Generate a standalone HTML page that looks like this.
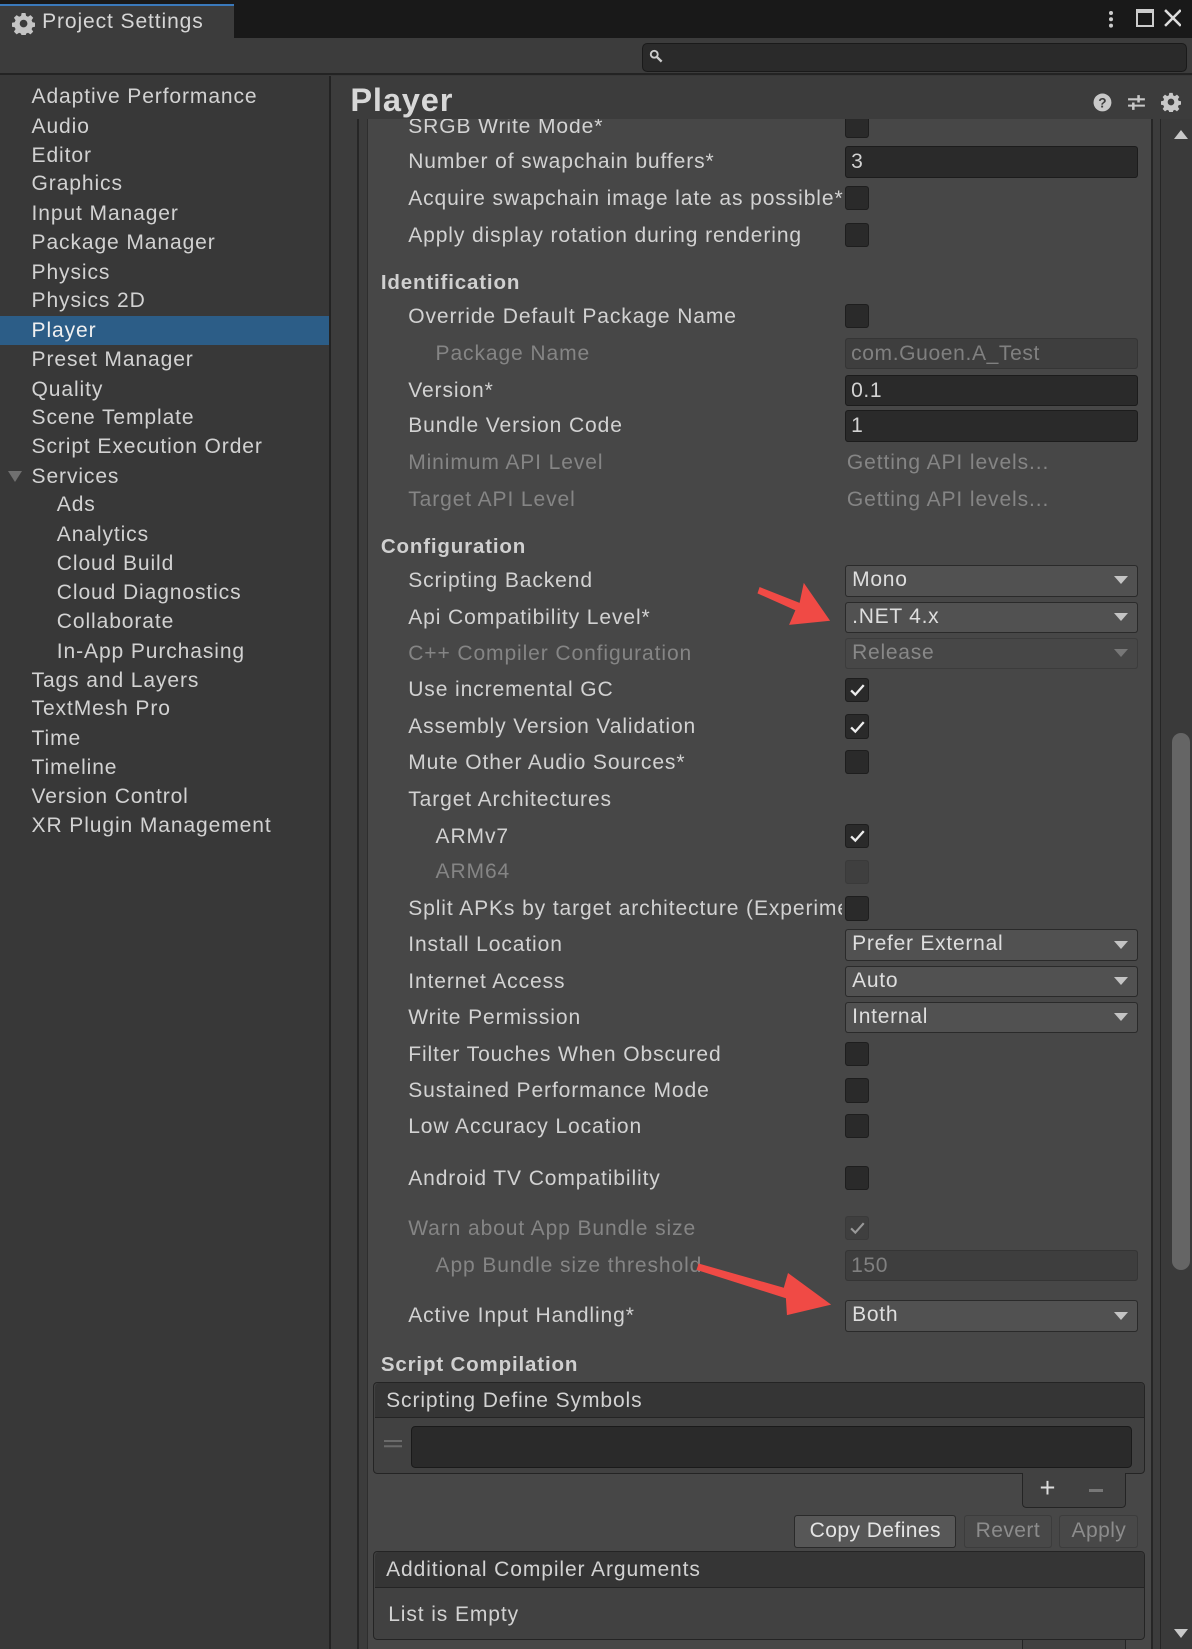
<!DOCTYPE html>
<html><head><meta charset="utf-8"><style>
*{box-sizing:border-box;margin:0;padding:0}
html,body{width:1192px;height:1649px;overflow:hidden;background:#383838}
#w{position:relative;width:1133px;height:1568px;zoom:1.05208;font-family:"Liberation Sans",sans-serif;color:#d2d2d2;overflow:hidden;background:#383838}
.a{position:absolute}
.t{position:absolute;font-size:20px;line-height:26px;white-space:nowrap;letter-spacing:0.85px}
.d{color:#858585}
.h{font-weight:bold;font-size:19.5px;color:#d0d0d0;letter-spacing:0.8px}
.cb{position:absolute;left:803px;width:23px;height:23px;background:#2a2a2a;border:1px solid #1e1e1e;border-radius:3px}
.cb.dis{background:#3f3f3f;border-color:#3a3a3a}
.cb svg{position:absolute;left:3px;top:3px}
.f{position:absolute;left:803px;width:279px;height:30px;background:#2a2a2a;border:1px solid #1c1c1c;border-radius:3px;font-size:20px;line-height:28px;padding-left:5px;color:#d2d2d2;letter-spacing:0.6px}
.f.dis{background:#3e3e3e;border-color:#353535;color:#808080}
.dd{position:absolute;left:803px;width:279px;height:30px;background:#515151;border:1px solid #2a2a2a;border-radius:3px;font-size:20px;line-height:27px;padding-left:6px;color:#dedede;letter-spacing:0.7px}
.dd:after{content:"";position:absolute;right:9px;top:10px;border-left:7px solid transparent;border-right:7px solid transparent;border-top:8px solid #c4c4c4}
.dd.dis{background:#474747;border-color:#3c3c3c;color:#888}
.dd.dis:after{border-top-color:#777}
.sb{left:30px}
.btn{position:absolute;height:31px;border-radius:3px;font-size:20px;line-height:29px;text-align:center;letter-spacing:0.4px}
</style></head><body><div id="w">
<div class="a" style="left:0;top:0;width:1133px;height:36px;background:#191919"></div>
<div class="a" style="left:0;top:4px;width:222px;height:33px;background:#3c3c3c;border-top:2px solid #3a79bb"></div>
<svg class="a" style="left:11px;top:11px" width="22" height="22" viewBox="0 0 24 24"><path fill="#c4c4c4" d="M10 1h4l.6 3 2 .9 2.6-1.7 2.8 2.8-1.7 2.6.9 2 3 .6v4l-3 .6-.9 2 1.7 2.6-2.8 2.8-2.6-1.7-2 .9-.6 3h-4l-.6-3-2-.9-2.6 1.7-2.8-2.8 1.7-2.6-.9-2-3-.6v-4l3-.6.9-2-1.7-2.6 2.8-2.8 2.6 1.7 2-.9zM12 8a4 4 0 1 0 0 8 4 4 0 1 0 0-8z"/></svg>
<div class="t" style="left:40px;top:8px;color:#d6d6d6">Project Settings</div>
<div class="a" style="left:1054px;top:10px;width:4px;height:4px;background:#ccc;border-radius:2px;box-shadow:0 6px 0 #ccc,0 12px 0 #ccc"></div>
<div class="a" style="left:1080px;top:9px;width:17px;height:17px;border:2px solid #ccc;border-top-width:4px"></div>
<svg class="a" style="left:1106px;top:9px" width="17" height="17"><path d="M1 1L16 16M16 1L1 16" stroke="#ddd" stroke-width="2.4"/></svg>
<div class="a" style="left:0;top:36px;width:1133px;height:35px;background:#3c3c3c;border-bottom:2px solid #232323"></div>
<div class="a" style="left:610px;top:41px;width:518px;height:27px;background:#2a2a2a;border:1px solid #1a1a1a;border-radius:5px"></div>
<svg class="a" style="left:617px;top:47px" width="14" height="14"><circle cx="5" cy="5" r="3.3" stroke="#ccc" stroke-width="1.8" fill="none"/><path d="M7.5 7.5L12 12" stroke="#ccc" stroke-width="2.2"/></svg>
<div class="a" style="left:0;top:72px;width:313px;height:1500px;background:#383838"></div>
<div class="a" style="left:0;top:300px;width:313px;height:28px;background:#2c5d87"></div>
<div class="a" style="left:313px;top:72px;width:2px;height:1500px;background:#232323"></div>
<div class="t sb" style="top:79px">Adaptive Performance</div>
<div class="t sb" style="top:107px">Audio</div>
<div class="t sb" style="top:135px">Editor</div>
<div class="t sb" style="top:162px">Graphics</div>
<div class="t sb" style="top:190px">Input Manager</div>
<div class="t sb" style="top:218px">Package Manager</div>
<div class="t sb" style="top:246px">Physics</div>
<div class="t sb" style="top:273px">Physics 2D</div>
<div class="t sb" style="top:301px;color:#f0f0f0">Player</div>
<div class="t sb" style="top:329px">Preset Manager</div>
<div class="t sb" style="top:357px">Quality</div>
<div class="t sb" style="top:384px">Scene Template</div>
<div class="t sb" style="top:412px">Script Execution Order</div>
<div class="a" style="left:8px;top:448px;border-left:7px solid transparent;border-right:7px solid transparent;border-top:11px solid #707070"></div>
<div class="t sb" style="top:440px">Services</div>
<div class="t" style="left:54px;top:467px">Ads</div>
<div class="t" style="left:54px;top:495px">Analytics</div>
<div class="t" style="left:54px;top:523px">Cloud Build</div>
<div class="t" style="left:54px;top:550px">Cloud Diagnostics</div>
<div class="t" style="left:54px;top:578px">Collaborate</div>
<div class="t" style="left:54px;top:606px">In-App Purchasing</div>
<div class="t sb" style="top:634px">Tags and Layers</div>
<div class="t sb" style="top:661px">TextMesh Pro</div>
<div class="t sb" style="top:689px">Time</div>
<div class="t sb" style="top:717px">Timeline</div>
<div class="t sb" style="top:744px">Version Control</div>
<div class="t sb" style="top:772px">XR Plugin Management</div>
<div class="a" style="left:315px;top:72px;width:818px;height:1500px;background:#3c3c3c"></div>
<div class="t" style="left:333px;top:76px;font-size:31px;line-height:38px;font-weight:bold;color:#d8d8d8;letter-spacing:0.8px">Player</div>
<svg class="a" style="left:1039px;top:88px" width="18" height="18"><circle cx="9" cy="9" r="8.5" fill="#c8c8c8"/><text x="9" y="14" font-size="13" font-weight="bold" text-anchor="middle" fill="#3c3c3c" font-family="Liberation Sans">?</text></svg>
<svg class="a" style="left:1071px;top:88px" width="18" height="18"><path d="M1 6h16M1 12h16" stroke="#c8c8c8" stroke-width="2"/><path d="M11 2v7M6 9v7" stroke="#c8c8c8" stroke-width="2.4"/></svg>
<svg class="a" style="left:1104px;top:87px" width="19" height="19" viewBox="0 0 24 24"><path fill="#c8c8c8" d="M10 1h4l.6 3 2 .9 2.6-1.7 2.8 2.8-1.7 2.6.9 2 3 .6v4l-3 .6-.9 2 1.7 2.6-2.8 2.8-2.6-1.7-2 .9-.6 3h-4l-.6-3-2-.9-2.6 1.7-2.8-2.8 1.7-2.6-.9-2-3-.6v-4l3-.6.9-2-1.7-2.6 2.8-2.8 2.6 1.7 2-.9zM12 8a4 4 0 1 0 0 8 4 4 0 1 0 0-8z"/></svg>
<div class="a" style="left:339px;top:113px;width:2px;height:1460px;background:#262626"></div>
<div class="a" style="left:349px;top:113px;width:745px;height:1460px;background:#474747;border-left:1px solid #2e2e2e"></div>
<div class="a" style="left:1094px;top:113px;width:2px;height:1460px;background:#262626"></div>
<div class="a" style="left:1103px;top:113px;width:30px;height:1460px;background:#3a3a3a;border-left:1px solid #262626"></div>
<div class="a" style="left:1114px;top:697px;width:17px;height:510px;background:#656565;border-radius:9px"></div>
<div class="a" style="left:1116px;top:124px;border-left:7px solid transparent;border-right:7px solid transparent;border-bottom:9px solid #c8c8c8"></div>
<div class="a" style="left:1116px;top:1548px;border-left:7px solid transparent;border-right:7px solid transparent;border-top:9px solid #c8c8c8"></div>
<div class="a" style="left:350px;top:113px;width:744px;height:1460px;overflow:hidden">
<div class="a" style="left:-350px;top:-113px;width:1133px;height:1600px">
<div class="t" style="left:388px;top:107px">SRGB Write Mode*</div><div class="cb" style="top:108px"></div>
<div class="t" style="left:388px;top:141px">Number of swapchain buffers*</div><div class="f" style="top:139px">3</div>
<div class="t" style="left:388px;top:176px">Acquire swapchain image late as possible*</div><div class="cb" style="top:177px"></div>
<div class="t" style="left:388px;top:211px">Apply display rotation during rendering</div><div class="cb" style="top:212px"></div>
<div class="t h" style="left:362px;top:256px">Identification</div>
<div class="t" style="left:388px;top:288px">Override Default Package Name</div><div class="cb" style="top:289px"></div>
<div class="t d" style="left:414px;top:323px">Package Name</div><div class="f dis" style="top:321px">com.Guoen.A_Test</div>
<div class="t" style="left:388px;top:358px">Version*</div><div class="f" style="top:356px">0.1</div>
<div class="t" style="left:388px;top:392px">Bundle Version Code</div><div class="f" style="top:390px">1</div>
<div class="t d" style="left:388px;top:427px">Minimum API Level</div><div class="t d" style="left:805px;top:427px">Getting API levels...</div>
<div class="t d" style="left:388px;top:462px">Target API Level</div><div class="t d" style="left:805px;top:462px">Getting API levels...</div>
<div class="t h" style="left:362px;top:507px">Configuration</div>
<div class="t" style="left:388px;top:539px">Scripting Backend</div><div class="dd" style="top:537px">Mono</div>
<div class="t" style="left:388px;top:574px">Api Compatibility Level*</div><div class="dd" style="top:572px">.NET 4.x</div>
<div class="t d" style="left:388px;top:608px">C++ Compiler Configuration</div><div class="dd dis" style="top:606px">Release</div>
<div class="t" style="left:388px;top:643px">Use incremental GC</div><div class="cb" style="top:644px"><svg width="16" height="16"><path d="M2 8l4 4 8-9" stroke="#eee" stroke-width="2.2" fill="none"/></svg></div>
<div class="t" style="left:388px;top:678px">Assembly Version Validation</div><div class="cb" style="top:679px"><svg width="16" height="16"><path d="M2 8l4 4 8-9" stroke="#eee" stroke-width="2.2" fill="none"/></svg></div>
<div class="t" style="left:388px;top:712px">Mute Other Audio Sources*</div><div class="cb" style="top:713px"></div>
<div class="t" style="left:388px;top:747px">Target Architectures</div>
<div class="t" style="left:414px;top:782px">ARMv7</div><div class="cb" style="top:783px"><svg width="16" height="16"><path d="M2 8l4 4 8-9" stroke="#eee" stroke-width="2.2" fill="none"/></svg></div>
<div class="t d" style="left:414px;top:816px">ARM64</div><div class="cb dis" style="top:817px"></div>
<div class="t" style="left:388px;top:851px;width:412px;overflow:hidden">Split APKs by target architecture (Experimental)</div><div class="cb" style="top:852px"></div>
<div class="t" style="left:388px;top:885px">Install Location</div><div class="dd" style="top:883px">Prefer External</div>
<div class="t" style="left:388px;top:920px">Internet Access</div><div class="dd" style="top:918px">Auto</div>
<div class="t" style="left:388px;top:954px">Write Permission</div><div class="dd" style="top:952px">Internal</div>
<div class="t" style="left:388px;top:989px">Filter Touches When Obscured</div><div class="cb" style="top:990px"></div>
<div class="t" style="left:388px;top:1024px">Sustained Performance Mode</div><div class="cb" style="top:1025px"></div>
<div class="t" style="left:388px;top:1058px">Low Accuracy Location</div><div class="cb" style="top:1059px"></div>
<div class="t" style="left:388px;top:1107px">Android TV Compatibility</div><div class="cb" style="top:1108px"></div>
<div class="t d" style="left:388px;top:1155px">Warn about App Bundle size</div><div class="cb dis" style="top:1156px"><svg width="16" height="16"><path d="M2 8l4 4 8-9" stroke="#999" stroke-width="2" fill="none"/></svg></div>
<div class="t d" style="left:414px;top:1190px">App Bundle size threshold</div><div class="f dis" style="top:1188px">150</div>
<div class="t" style="left:388px;top:1238px">Active Input Handling*</div><div class="dd" style="top:1236px">Both</div>
<div class="t h" style="left:362px;top:1284px">Script Compilation</div>
<div class="a" style="left:355px;top:1314px;width:733px;height:87px;border:1px solid #242424;border-radius:4px;background:#414141"></div>
<div class="a" style="left:356px;top:1315px;width:731px;height:33px;background:#353535;border-bottom:1px solid #242424;border-radius:4px 4px 0 0"></div>
<div class="t" style="left:367px;top:1318px">Scripting Define Symbols</div>
<div class="a" style="left:365px;top:1369px;width:17px;height:2px;background:#6a6a6a;box-shadow:0 5px 0 #6a6a6a"></div>
<div class="a" style="left:391px;top:1355px;width:685px;height:40px;background:#2a2a2a;border:1px solid #1a1a1a;border-radius:4px"></div>
<div class="a" style="left:971px;top:1400px;width:99px;height:33px;background:#414141;border:1px solid #242424;border-top:none;border-radius:0 0 4px 4px"></div>
<div class="t" style="left:988px;top:1401px;font-size:26px;color:#ddd">+</div>
<div class="a" style="left:1035px;top:1415px;width:13px;height:3px;background:#777"></div>
<div class="btn" style="left:755px;top:1440px;width:154px;background:#575757;border:1px solid #2a2a2a;color:#e4e4e4">Copy Defines</div>
<div class="btn" style="left:916px;top:1440px;width:84px;background:#484848;border:1px solid #3c3c3c;color:#8c8c8c">Revert</div>
<div class="btn" style="left:1007px;top:1440px;width:75px;background:#484848;border:1px solid #3c3c3c;color:#8c8c8c">Apply</div>
<div class="a" style="left:355px;top:1474px;width:733px;height:85px;border:1px solid #242424;border-radius:4px;background:#414141"></div>
<div class="a" style="left:356px;top:1475px;width:731px;height:34px;background:#353535;border-bottom:1px solid #242424;border-radius:4px 4px 0 0"></div>
<div class="t" style="left:367px;top:1479px">Additional Compiler Arguments</div>
<div class="t" style="left:369px;top:1522px">List is Empty</div>
<div class="a" style="left:971px;top:1559px;width:99px;height:20px;background:#414141;border:1px solid #242424;border-top:none"></div>
<svg class="a" style="left:0;top:0" width="1133" height="1600"><polygon points="722,558 760,573 764,554 789,590 750,594 756,580 720,564" fill="#f04a45"/><polygon points="664,1201 745,1224 749,1210 790,1240 748,1250 747,1234 662,1207" fill="#f04a45"/></svg>
</div></div>
</div></body></html>
